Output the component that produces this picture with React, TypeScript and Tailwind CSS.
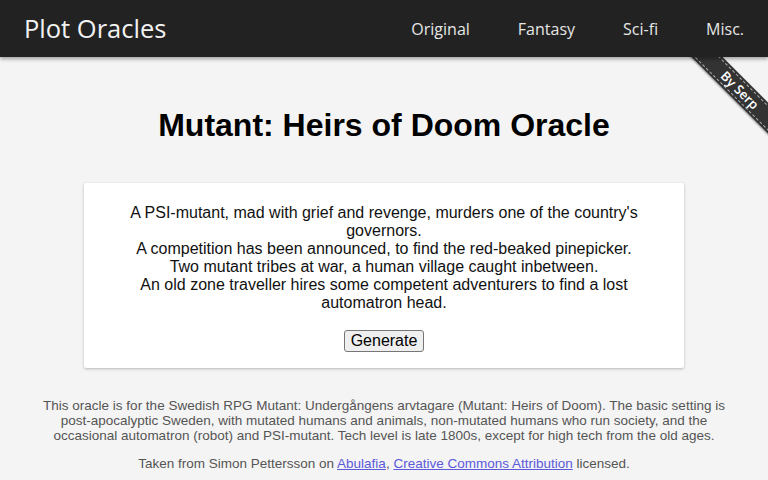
import React from "react";

export default function App() {
  return (
    <div className="relative min-h-[480px] w-full bg-[#f4f4f4] overflow-hidden" style={{ fontFamily: '"Liberation Sans", Arial, sans-serif' }}>
      <header className="relative z-20 flex h-[57px] items-center justify-between bg-[#222222] shadow-[0_2px_4px_rgba(0,0,0,0.35)]" style={{ fontFamily: '"Open Sans", sans-serif' }}>
        <div className="pl-6 text-[25.5px] leading-none text-[#f2f2f2]">Plot Oracles</div>
        <nav className="flex items-center text-[16px] text-[#e6e6e6]">
          <a className="px-6">Original</a>
          <a className="px-6">Fantasy</a>
          <a className="px-6">Sci-fi</a>
          <a className="px-6">Misc.</a>
        </nav>
      </header>

      <div className="pointer-events-none absolute right-0 top-0 z-10 h-[150px] w-[150px] overflow-hidden">
        <div
          className="absolute left-[22px] top-[79px] flex h-[22px] w-[200px] rotate-45 items-center justify-center bg-[#333333] shadow-[0_1px_2px_rgba(0,0,0,0.4)]"
          style={{ fontFamily: '"Open Sans", sans-serif' }}
        >
          <div className="absolute inset-x-0 top-[2px] bottom-[2px] border-y border-dashed border-white/60" />
          <span className="relative text-[13px] font-semibold leading-none text-white">By Serp</span>
        </div>
      </div>

      <main className="flex flex-col items-center pt-[50px]">
        <h1 className="text-[32px] font-bold leading-[37px] text-black">Mutant: Heirs of Doom Oracle</h1>
        <div className="mt-[39px] flex w-[600px] flex-col items-center rounded-[2px] bg-white px-10 pt-[21px] pb-[16px] shadow-[0_1px_3px_rgba(0,0,0,0.25)]">
          <div className="text-center text-[16px] leading-[18px] text-[#111]">
            <div>A PSI-mutant, mad with grief and revenge, murders one of the country's governors.</div>
            <div>A competition has been announced, to find the red-beaked pinepicker.</div>
            <div>Two mutant tribes at war, a human village caught inbetween.</div>
            <div>An old zone traveller hires some competent adventurers to find a lost automatron head.</div>
          </div>
          <button className="mt-[18px] h-[22px] rounded-[3px] border border-[#767676] bg-[#efefef] px-[6px] text-[16px] leading-[18px] text-black">
            Generate
          </button>
        </div>
        <div className="mt-[30px] w-[700px] text-center text-[13.5px] leading-[15px] text-[#555555]">
          <p>
            This oracle is for the Swedish RPG Mutant: Undergångens arvtagare (Mutant: Heirs of Doom). The basic setting is post-apocalyptic Sweden, with mutated humans and animals, non-mutated humans who run society, and the occasional automatron (robot) and PSI-mutant. Tech level is late 1800s, except for high tech from the old ages.
          </p>
          <p className="mt-[13px]">
            Taken from Simon Pettersson on <a className="text-[#5a5adb] underline">Abulafia</a>,{" "}
            <a className="text-[#5a5adb] underline">Creative Commons Attribution</a> licensed.
          </p>
        </div>
      </main>
    </div>
  );
}
